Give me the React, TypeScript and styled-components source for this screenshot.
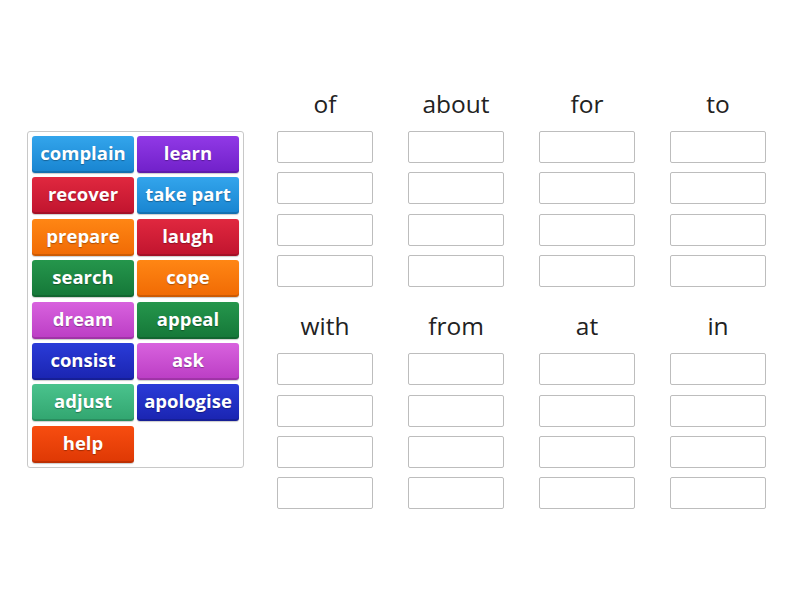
import React from 'react';
import styled, { createGlobalStyle } from 'styled-components';

const GlobalStyle = createGlobalStyle`
  body {
    margin: 0;
    background: #fff;
    font-family: 'Open Sans', 'Liberation Sans', sans-serif;
  }
`;

type Tone = 'blue' | 'purple' | 'red' | 'orange' | 'green' | 'pink' | 'navy' | 'teal' | 'flame';

const tones: Record<Tone, [string, string]> = {
  blue: ['#33a5ec', '#1884d0'],
  purple: ['#9139e6', '#7020c9'],
  red: ['#e0283f', '#c0142e'],
  orange: ['#ff8614', '#f06a04'],
  green: ['#25964c', '#157738'],
  pink: ['#d862de', '#bb3dc4'],
  navy: ['#2a3bd8', '#1a24b0'],
  teal: ['#4ac38d', '#31a56f'],
  flame: ['#f74d10', '#de3804'],
};

const Page = styled.div`
  display: flex;
  align-items: flex-start;
  padding-left: 27px;
  gap: 33px;
`;

const Bank = styled.div`
  margin-top: 131px;
  display: grid;
  grid-template-columns: 102px 102px;
  column-gap: 3px;
  row-gap: 4.4px;
  padding: 4px;
  border: 1px solid #c8c8c8;
  border-radius: 3px;
`;

const Tile = styled.div<{ $tone: Tone }>`
  height: 37px;
  display: flex;
  align-items: center;
  justify-content: center;
  border-radius: 3px;
  background: linear-gradient(${p => tones[p.$tone][0]}, ${p => tones[p.$tone][1]});
  box-shadow: inset 0 -2px 0 rgba(0, 0, 0, 0.15), 0 1px 1px rgba(0, 0, 0, 0.2);
  color: #fff;
  font-weight: 700;
  font-size: 18.5px;
  white-space: nowrap;
  text-shadow: 0 1px 1px rgba(0, 0, 0, 0.3);
  padding-bottom: 4px;
  box-sizing: border-box;
`;

const Groups = styled.div`
  margin-top: 89px;
  display: flex;
  flex-direction: column;
  gap: 24px;
`;

const GroupRow = styled.div`
  display: flex;
  gap: 35px;
`;

const Column = styled.div`
  width: 96px;
  display: flex;
  flex-direction: column;
`;

const Heading = styled.div`
  height: 30px;
  line-height: 30px;
  text-align: center;
  font-size: 24.5px;
  color: #222;
  margin-bottom: 12px;
  white-space: nowrap;
`;

const Slots = styled.div`
  display: flex;
  flex-direction: column;
  gap: 9.4px;
`;

const Slot = styled.div`
  height: 32px;
  border: 1px solid #bdbdbd;
  border-radius: 2px;
  box-sizing: border-box;
`;

const words: [string, Tone][] = [
  ['complain', 'blue'],
  ['learn', 'purple'],
  ['recover', 'red'],
  ['take part', 'blue'],
  ['prepare', 'orange'],
  ['laugh', 'red'],
  ['search', 'green'],
  ['cope', 'orange'],
  ['dream', 'pink'],
  ['appeal', 'green'],
  ['consist', 'navy'],
  ['ask', 'pink'],
  ['adjust', 'teal'],
  ['apologise', 'navy'],
  ['help', 'flame'],
];

const groups = [
  ['of', 'about', 'for', 'to'],
  ['with', 'from', 'at', 'in'],
];

export default function App() {
  return (
    <>
      <GlobalStyle />
      <Page>
        <Bank>
          {words.map(([w, tone]) => (
            <Tile key={w} $tone={tone}>{w}</Tile>
          ))}
        </Bank>
        <Groups>
          {groups.map((row, i) => (
            <GroupRow key={i}>
              {row.map(h => (
                <Column key={h}>
                  <Heading>{h}</Heading>
                  <Slots>
                    {[0, 1, 2, 3].map(n => (
                      <Slot key={n} />
                    ))}
                  </Slots>
                </Column>
              ))}
            </GroupRow>
          ))}
        </Groups>
      </Page>
    </>
  );
}
